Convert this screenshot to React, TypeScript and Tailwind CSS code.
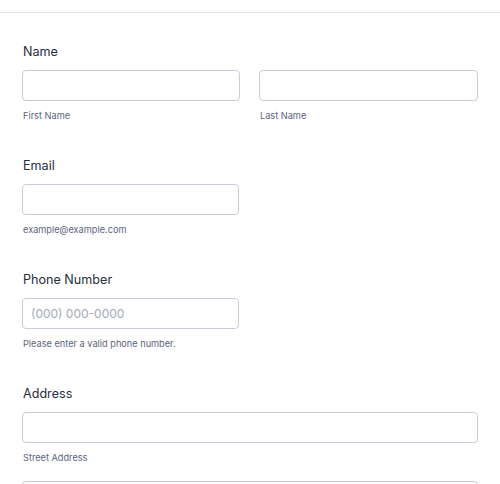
import React from "react";

const font = { fontFamily: "Inter, 'Noto Sans', sans-serif" };

function Field({ label, children, className = "" }: { label: string; children: React.ReactNode; className?: string }) {
  return (
    <div className={"flex flex-col " + className}>
      <div className="h-5 pl-[1px] text-[12.6px] leading-[22px] text-[#262d40] font-normal">{label}</div>
      <div className="mt-[9px]">{children}</div>
    </div>
  );
}

function Input({ placeholder, sub, className = "" }: { placeholder?: string; sub?: string; className?: string }) {
  return (
    <div className={"flex flex-col " + className}>
      <input
        placeholder={placeholder}
        className="h-[31px] w-full rounded-[4px] border border-[#c8cdd9] bg-white px-2 text-[12px] text-[#2c3345] placeholder:text-[#a3a8bb] outline-none"
        style={font}
      />
      {sub !== undefined && (
        <div className="mt-[7px] h-4 pl-[1px] text-[9.2px] leading-4 text-[#5b6480]">{sub}</div>
      )}
    </div>
  );
}

export default function App() {
  return (
    <div className="w-[500px] h-[484px] overflow-hidden bg-white" style={font}>
      <div className="h-3" />
      <div className="h-px bg-[#e3e5ee]" />
      <div className="pl-[22px] pr-[22px] pt-[28px] flex flex-col gap-[31px]">
        <Field label="Name">
          <div className="flex gap-[19px]">
            <Input sub="First Name" className="w-[218px]" />
            <Input sub="Last Name" className="w-[219px]" />
          </div>
        </Field>
        <Field label="Email">
          <Input sub="example@example.com" className="w-[217px]" />
        </Field>
        <Field label="Phone Number">
          <Input placeholder="(000) 000-0000" sub="Please enter a valid phone number." className="w-[217px]" />
        </Field>
        <Field label="Address">
          <Input sub="Street Address" className="w-[456px]" />
          <Input className="w-[456px] mt-[15px]" />
        </Field>
      </div>
    </div>
  );
}
